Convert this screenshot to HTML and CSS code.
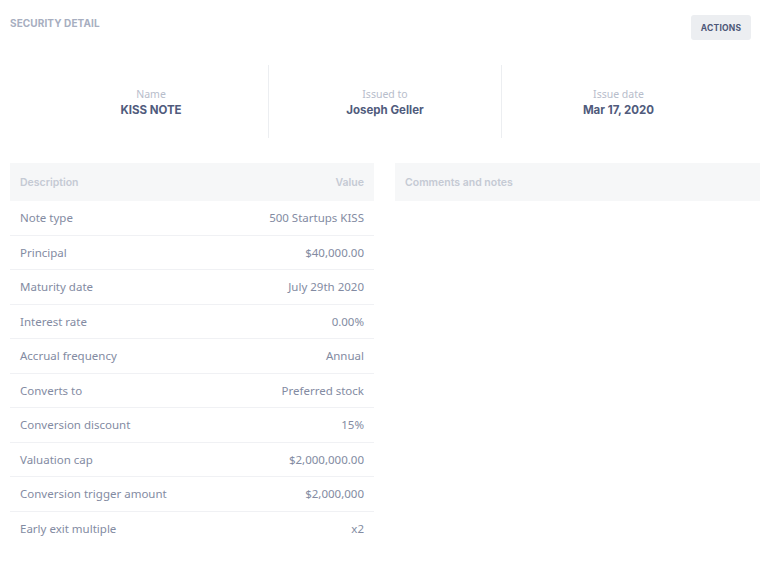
FILE: index.html
```html
<!DOCTYPE html>
<html>
<head>
<meta charset="utf-8">
<link rel="stylesheet" href="styles.css">
</head>
<body>
<div class="page">
  <div class="topbar">
    <div class="title">SECURITY DETAIL</div>
    <button class="btn">ACTIONS</button>
  </div>
  <div class="summary">
    <div class="sum-col">
      <div class="sum-label">Name</div>
      <div class="sum-value">KISS NOTE</div>
    </div>
    <div class="sum-col">
      <div class="sum-label">Issued to</div>
      <div class="sum-value">Joseph Geller</div>
    </div>
    <div class="sum-col">
      <div class="sum-label">Issue date</div>
      <div class="sum-value">Mar 17, 2020</div>
    </div>
  </div>
  <div class="panels">
    <div class="table">
      <div class="thead"><span>Description</span><span>Value</span></div>
      <div class="row"><span>Note type</span><span>500 Startups KISS</span></div>
      <div class="row"><span>Principal</span><span>$40,000.00</span></div>
      <div class="row"><span>Maturity date</span><span>July 29th 2020</span></div>
      <div class="row"><span>Interest rate</span><span>0.00%</span></div>
      <div class="row"><span>Accrual frequency</span><span>Annual</span></div>
      <div class="row"><span>Converts to</span><span>Preferred stock</span></div>
      <div class="row"><span>Conversion discount</span><span>15%</span></div>
      <div class="row"><span>Valuation cap</span><span>$2,000,000.00</span></div>
      <div class="row"><span>Conversion trigger amount</span><span>$2,000,000</span></div>
      <div class="row last"><span>Early exit multiple</span><span>x2</span></div>
    </div>
    <div class="comments">
      <div class="thead"><span>Comments and notes</span></div>
    </div>
  </div>
</div>
</body>
</html>
```
FILE: styles.css
```css
* { box-sizing: border-box; }
html, body { margin: 0; padding: 0; background: #ffffff; }
body { font-family: "Noto Sans", "Open Sans", sans-serif; }
.page { width: 768px; height: 574px; padding: 15px 17px 0 10px; }
.topbar { display: flex; justify-content: space-between; align-items: flex-start; height: 25px; }
.title { font-family: Inter, sans-serif; font-weight: 700; font-size: 10px; color: #a7aec0; margin-top: 2px; letter-spacing: 0.1px; }
.btn { font-family: Inter, sans-serif; font-weight: 700; font-size: 8.5px; color: #4d5878; background: #eceef1; border: none; border-radius: 3px; width: 60px; height: 25px; padding: 0; letter-spacing: 0.2px; }
.summary { display: grid; grid-template-columns: 234px 233px 234px; margin: 25px 0 0 24px; height: 73px; }
.sum-col { display: flex; flex-direction: column; align-items: center; justify-content: center; border-left: 1px solid #eceef1; padding-top: 2px; }
.sum-col:first-child { border-left: none; }
.sum-label { font-size: 10.5px; color: #b7bdcb; line-height: 14px; }
.sum-value { font-family: Inter, sans-serif; font-weight: 700; font-size: 11.5px; color: #505b7c; line-height: 16px; margin-top: 1px; }
.panels { display: grid; grid-template-columns: 364px 365px; column-gap: 21px; margin-top: 25px; }
.thead { display: flex; justify-content: space-between; align-items: center; height: 38px; background: #f6f7f8; padding: 0 10px; font-family: Inter, sans-serif; font-weight: 600; font-size: 10.5px; color: #c5cad4; }
.row { display: flex; justify-content: space-between; align-items: center; height: 34.5px; padding: 0 10px; border-bottom: 1px solid #f0f1f4; font-size: 11.5px; color: #838ba2; }
.row.last { border-bottom: none; }
```
